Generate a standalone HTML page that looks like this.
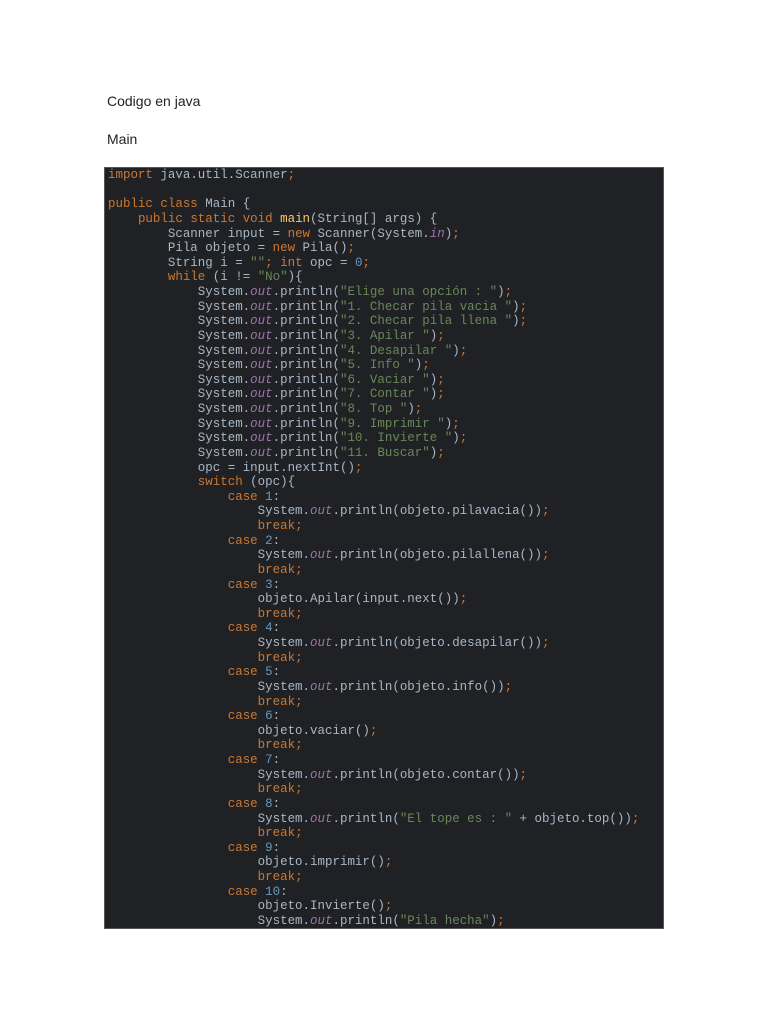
<!DOCTYPE html>
<html><head><meta charset="utf-8"><style>
body{margin:0;background:#fff;width:768px;height:1024px;position:relative;overflow:hidden;font-family:"Liberation Sans",sans-serif}
.t{position:absolute;left:107px;font-size:14px;color:#222}
.code{position:absolute;left:104px;top:167px;width:560px;height:762px;background:#202124;box-sizing:border-box;border:1px solid #555}
pre{margin:0;position:absolute;left:3px;top:0px;font-family:"Liberation Mono",monospace;font-size:12.47px;line-height:14.63px;color:#a9b7c6;letter-spacing:0}
.k{color:#cc7832}.s{color:#6a8759}.n{color:#6897bb}.o{color:#9876aa;font-style:italic}.m{color:#ffc66d}
</style></head><body>
<div class="t" style="top:93px">Codigo en java</div>
<div class="t" style="top:131px">Main</div>
<div class="code"><pre><span class="k">import</span> java.util.Scanner<span class="k">;</span>

<span class="k">public class</span> Main {
    <span class="k">public static void</span> <span class="m">main</span>(String[] args) {
        Scanner input = <span class="k">new</span> Scanner(System.<span class="o">in</span>)<span class="k">;</span>
        Pila objeto = <span class="k">new</span> Pila()<span class="k">;</span>
        String i = <span class="s">""</span><span class="k">; int</span> opc = <span class="n">0</span><span class="k">;</span>
        <span class="k">while</span> (i != <span class="s">"No"</span>){
            System.<span class="o">out</span>.println(<span class="s">"Elige una opción : "</span>)<span class="k">;</span>
            System.<span class="o">out</span>.println(<span class="s">"1. Checar pila vacia "</span>)<span class="k">;</span>
            System.<span class="o">out</span>.println(<span class="s">"2. Checar pila llena "</span>)<span class="k">;</span>
            System.<span class="o">out</span>.println(<span class="s">"3. Apilar "</span>)<span class="k">;</span>
            System.<span class="o">out</span>.println(<span class="s">"4. Desapilar "</span>)<span class="k">;</span>
            System.<span class="o">out</span>.println(<span class="s">"5. Info "</span>)<span class="k">;</span>
            System.<span class="o">out</span>.println(<span class="s">"6. Vaciar "</span>)<span class="k">;</span>
            System.<span class="o">out</span>.println(<span class="s">"7. Contar "</span>)<span class="k">;</span>
            System.<span class="o">out</span>.println(<span class="s">"8. Top "</span>)<span class="k">;</span>
            System.<span class="o">out</span>.println(<span class="s">"9. Imprimir "</span>)<span class="k">;</span>
            System.<span class="o">out</span>.println(<span class="s">"10. Invierte "</span>)<span class="k">;</span>
            System.<span class="o">out</span>.println(<span class="s">"11. Buscar"</span>)<span class="k">;</span>
            opc = input.nextInt()<span class="k">;</span>
            <span class="k">switch</span> (opc){
                <span class="k">case</span> <span class="n">1</span>:
                    System.<span class="o">out</span>.println(objeto.pilavacia())<span class="k">;</span>
                    <span class="k">break;</span>
                <span class="k">case</span> <span class="n">2</span>:
                    System.<span class="o">out</span>.println(objeto.pilallena())<span class="k">;</span>
                    <span class="k">break;</span>
                <span class="k">case</span> <span class="n">3</span>:
                    objeto.Apilar(input.next())<span class="k">;</span>
                    <span class="k">break;</span>
                <span class="k">case</span> <span class="n">4</span>:
                    System.<span class="o">out</span>.println(objeto.desapilar())<span class="k">;</span>
                    <span class="k">break;</span>
                <span class="k">case</span> <span class="n">5</span>:
                    System.<span class="o">out</span>.println(objeto.info())<span class="k">;</span>
                    <span class="k">break;</span>
                <span class="k">case</span> <span class="n">6</span>:
                    objeto.vaciar()<span class="k">;</span>
                    <span class="k">break;</span>
                <span class="k">case</span> <span class="n">7</span>:
                    System.<span class="o">out</span>.println(objeto.contar())<span class="k">;</span>
                    <span class="k">break;</span>
                <span class="k">case</span> <span class="n">8</span>:
                    System.<span class="o">out</span>.println(<span class="s">"El tope es : "</span> + objeto.top())<span class="k">;</span>
                    <span class="k">break;</span>
                <span class="k">case</span> <span class="n">9</span>:
                    objeto.imprimir()<span class="k">;</span>
                    <span class="k">break;</span>
                <span class="k">case</span> <span class="n">10</span>:
                    objeto.Invierte()<span class="k">;</span>
                    System.<span class="o">out</span>.println(<span class="s">"Pila hecha"</span>)<span class="k">;</span></pre></div>
</body></html>
